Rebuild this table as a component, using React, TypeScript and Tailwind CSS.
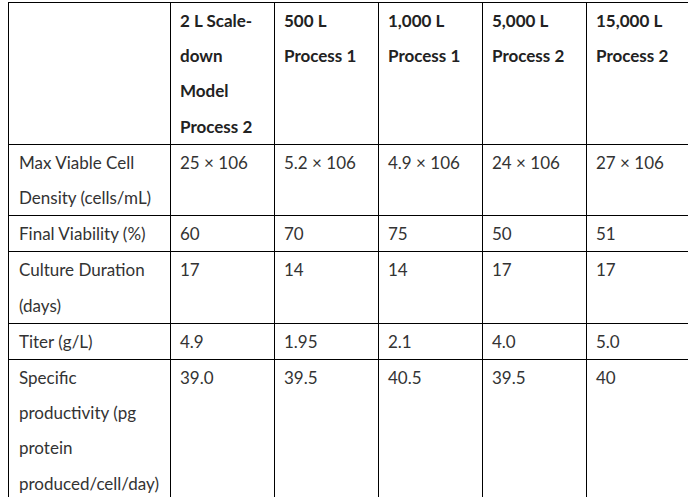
const headers = [
  '2 L Scale-down Model Process 2',
  '500 L Process 1',
  '1,000 L Process 1',
  '5,000 L Process 2',
  '15,000 L Process 2',
];

const rows: [string, string[]][] = [
  ['Max Viable Cell Density (cells/mL)', ['25 × 106', '5.2 × 106', '4.9 × 106', '24 × 106', '27 × 106']],
  ['Final Viability (%)', ['60', '70', '75', '50', '51']],
  ['Culture Duration (days)', ['17', '14', '14', '17', '17']],
  ['Titer (g/L)', ['4.9', '1.95', '2.1', '4.0', '5.0']],
  ['Specific productivity (pg protein produced/cell/day)', ['39.0', '39.5', '40.5', '39.5', '40']],
];

export default function App() {
  return (
    <div className="h-[497px] w-[688px] overflow-hidden bg-white font-['Lato',sans-serif] text-[17px] leading-[35.2px] text-[#333]">
      <div className="pl-2 pt-[2px]">
        <table className="w-[682px] table-fixed border-collapse">
          <colgroup>
            <col className="w-[162px]" />
            {headers.map((h) => (
              <col key={h} className="w-[104px]" />
            ))}
          </colgroup>
          <thead>
            <tr>
              <th className="border border-black pl-[10px] pr-[6px] text-left align-top font-bold"></th>
              {headers.map((h) => (
                <th key={h} className="border border-black pl-[9px] pr-[6px] text-left align-top font-bold text-[#222]">
                  {h}
                </th>
              ))}
            </tr>
          </thead>
          <tbody>
            {rows.map(([label, values]) => (
              <tr key={label}>
                <td className="border border-black pl-[10px] pr-[6px] align-top">{label}</td>
                {values.map((v, i) => (
                  <td key={i} className="border border-black pl-[9px] pr-[6px] align-top">
                    {v}
                  </td>
                ))}
              </tr>
            ))}
          </tbody>
        </table>
      </div>
    </div>
  );
}
